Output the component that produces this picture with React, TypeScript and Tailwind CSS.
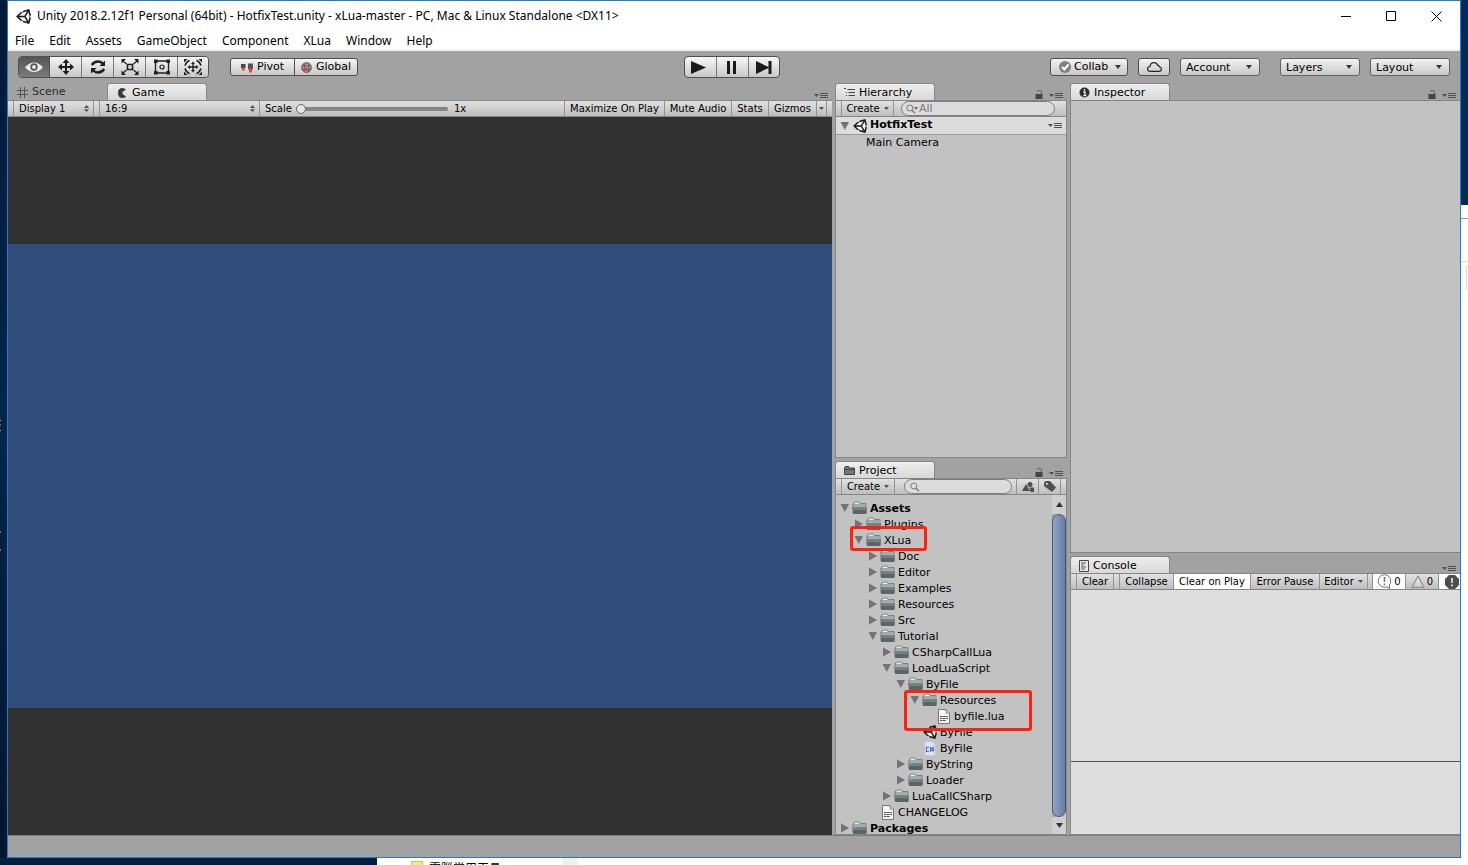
import type { ReactNode } from "react";
import { useState } from "react";

const MENUS = ["File", "Edit", "Assets", "GameObject", "Component", "XLua", "Window", "Help"];

type Node = {
    name: string;
    depth: number;
    icon: "folder" | "text" | "scene" | "script";
    open?: boolean;
    bold?: boolean;
};

const TREE: Node[] = [
    { name: "Assets", depth: 0, icon: "folder", open: true, bold: true },
    { name: "Plugins", depth: 1, icon: "folder", open: false },
    { name: "XLua", depth: 1, icon: "folder", open: true },
    { name: "Doc", depth: 2, icon: "folder", open: false },
    { name: "Editor", depth: 2, icon: "folder", open: false },
    { name: "Examples", depth: 2, icon: "folder", open: false },
    { name: "Resources", depth: 2, icon: "folder", open: false },
    { name: "Src", depth: 2, icon: "folder", open: false },
    { name: "Tutorial", depth: 2, icon: "folder", open: true },
    { name: "CSharpCallLua", depth: 3, icon: "folder", open: false },
    { name: "LoadLuaScript", depth: 3, icon: "folder", open: true },
    { name: "ByFile", depth: 4, icon: "folder", open: true },
    { name: "Resources", depth: 5, icon: "folder", open: true },
    { name: "byfile.lua", depth: 6, icon: "text" },
    { name: "ByFile", depth: 5, icon: "scene" },
    { name: "ByFile", depth: 5, icon: "script" },
    { name: "ByString", depth: 4, icon: "folder", open: false },
    { name: "Loader", depth: 4, icon: "folder", open: false },
    { name: "LuaCallCSharp", depth: 3, icon: "folder", open: false },
    { name: "CHANGELOG", depth: 2, icon: "text" },
    { name: "Packages", depth: 0, icon: "folder", open: false, bold: true },
];

/* ---------- icons ---------- */

function UnityLogo({ size = 14 }: { size?: number }) {
    return (
        <svg width={size} height={size} viewBox="14 12 486 488" className="shrink-0">
            <path d="M114 232H288L375 86 224 124Z M114 280H288L375 426 224 388Z M417 110L330 256 417 402 459 256Z" fill="#f4f4f4" />
            <path
                fill="#1c1c1c"
                d="M498.11,206.4,445.31,14.72,248.2,66.08,219,116.14l-59.2-.43L15.54,256,159.82,396.32l59.17-.43,29.24,50,197.08,51.36,52.8-191.62-30-49.63ZM223.77,124.2,374.55,86.51,288,232.33H114.87Zm0,263.63L114.87,279.71H288l86.55,145.81Zm193,14L330.17,256l86.58-145.84L458.56,256Z"
            />
        </svg>
    );
}

function Triangle({ open }: { open?: boolean }) {
    return (
        <svg width="10" height="10" viewBox="0 0 10 10" className="shrink-0">
            <path d={open ? "M0.500 1h8.500L4.800 9z" : "M1 0.500v9L9 5z"} fill="#737373" />
        </svg>
    );
}

function FolderIcon() {
    return (
        <svg width="16" height="14" viewBox="0 0 16 14" className="shrink-0">
            <path d="M1 12V3L2.500 1h4.500L8.300 2.500H14V12z" fill="#8b9696" stroke="#6d7878" strokeWidth=".8" />
            <path d="M2.800 1.500H6.800L8 3H2z" fill="#e2e7e7" />
            <path d="M2 4h11.500" stroke="#b4bdbd" />
            <path d="M0.500 5h14.500l-.6 8H1.100z" fill="#58666a" />
            <path d="M0.500 5h14.500l-.3 4H.8z" fill="#75827f" />
            <path d="M0.500 5.500h14.500" stroke="#a9b3b3" />
        </svg>
    );
}

function TextFileIcon() {
    return (
        <svg width="16" height="15" viewBox="0 0 16 15" className="shrink-0">
            <path d="M2.500 0.500h7.500l3.500 3.500v10.500h-11z" fill="#f6f6f6" stroke="#777" />
            <path d="M10 0.500v3.500h3.500" fill="#cfcfcf" stroke="#888" />
            <path d="M4 7.500h8M4 9.500h8M4 11.500h6" stroke="#4a4a4a" strokeDasharray="2 .6 3 .6" />
        </svg>
    );
}

function ScriptIcon() {
    return (
        <svg width="16" height="15" viewBox="0 0 16 15" className="shrink-0">
            <path d="M3 0.500h7l3 3v11H3z" fill="#dce3ee" stroke="#c3ccd9" />
            <path d="M7 6.300H4.500v4.200H7M8.700 5.800v5M11 5.800v5M7.700 7.300h4.500M7.700 9.400h4.500" fill="none" stroke="#3f6fc4" strokeWidth="1.100" />
        </svg>
    );
}

function NodeIcon({ icon }: { icon: Node["icon"] }) {
    if (icon === "folder") return <FolderIcon />;
    if (icon === "text") return <TextFileIcon />;
    if (icon === "script") return <ScriptIcon />;
    return <span className="px-px"><UnityLogo /></span>;
}

function Caret() {
    return (
        <svg width="6" height="4" viewBox="0 0 6 4" className="shrink-0">
            <path d="M0 0h6L3 4z" fill="#333" />
        </svg>
    );
}

function SmallCaret() {
    return (
        <svg width="5" height="3" viewBox="0 0 5 3" className="shrink-0">
            <path d="M0 0h5L2.500 3z" fill="#505050" />
        </svg>
    );
}

function UpDown() {
    return (
        <svg width="5" height="7" viewBox="0 0 5 7">
            <path d="M0 3L2.500 0 5 3zM0 4.200h5L2.500 7z" fill="#505050" />
        </svg>
    );
}

function PaneMenu() {
    return (
        <button type="button" aria-label="Panel menu" className="flex items-center">
            <svg width="14" height="7" viewBox="0 0 14 7">
                <path d="M0 2h5L2.500 5z" fill="#505050" />
                <path d="M6 1.500h8M6 3.500h8M6 5.500h8" stroke="#505050" />
            </svg>
        </button>
    );
}

function LockButton() {
    return (
        <button type="button" aria-label="Lock panel">
            <svg width="8" height="9" viewBox="0 0 8 9">
                <path d="M2.500 2V1.200Q2.500 .5 4 .5h.8Q6.500 .5 6.500 2v3" fill="none" stroke="#606060" />
                <path d="M0.500 4h7v5h-7z" fill="#454545" />
            </svg>
        </button>
    );
}

function SearchIcon({ caret }: { caret?: boolean }) {
    return (
        <svg width="13" height="10" viewBox="0 0 13 10" className="shrink-0">
            <circle cx="3.800" cy="4" r="3" fill="none" stroke="#7b7b7b" />
            <path d="M6 6.200l3 3" stroke="#7b7b7b" strokeWidth="1.400" />
            {caret && <path d="M7.500 3h5L10 6z" fill="#7b7b7b" />}
        </svg>
    );
}

const TOOLS = [
    {
        name: "Hand",
        art: (
            <>
                <path d="M1 8.500Q10 -1.500 19 8.500Q10 17.500 1 8.500z" fill="#ececec" />
                <circle cx="10" cy="8" r="2.800" fill="none" stroke="#555" strokeWidth="1.800" />
            </>
        ),
    },
    {
        name: "Move",
        art: <path d="M10 0l3.500 4h-2.500v3h3V4.500L18 8l-4 3.500V9h-3v3h2.500L10 16l-3.500-4H9V9H6v2.500L2 8l4-3.500V7h3V4H6.500z" fill="#1f1f1f" />,
    },
    {
        name: "Rotate",
        art: (
            <>
                <path d="M3.800 6Q6 2.500 10 2.500Q13 2.500 14.800 4.500M16.200 10Q14 13.500 10 13.500Q7 13.500 5.200 11.500" fill="none" stroke="#1f1f1f" strokeWidth="2.400" />
                <path d="M17 1.500V7h-5.500zM3 14.500V9h5.500z" fill="#1f1f1f" />
            </>
        ),
    },
    {
        name: "Scale",
        art: (
            <>
                <path d="M7.500 5.500h5v5h-5z" fill="none" stroke="#1f1f1f" strokeWidth="1.600" />
                <path d="M3 2l3.500 3M17 2l-3.500 3M3 14l3.500-3M17 14l-3.500-3" stroke="#1f1f1f" strokeWidth="1.200" />
                <path d="M1.500 0h4.500L1.500 4.500zM18.500 0h-4.500l4.500 4.500zM1.500 16h4.500l-4.500-4.500zM18.500 16h-4.500l4.500-4.500z" fill="#1f1f1f" />
            </>
        ),
    },
    {
        name: "Rect",
        art: (
            <>
                <path d="M3.500 2h13v12h-13z" fill="none" stroke="#1f1f1f" strokeWidth="1.300" />
                <circle cx="10" cy="8" r="2" fill="none" stroke="#1f1f1f" strokeWidth="1.200" />
                <path d="M2 .5h3.500V4H2zM14.500 .5H18V4h-3.500zM2 12h3.500v3.500H2zM14.500 12H18v3.500h-3.500z" fill="#1f1f1f" />
            </>
        ),
    },
    {
        name: "Transform",
        art: (
            <>
                <path d="M10 2.500l2 2.500h-1.300v2.300H13V6l2.500 2-2.500 2V8.700h-2.300V11H12l-2 2.500L8 11h1.300V8.700H7V10L4.500 8 7 6v1.300h2.300V5H8z" fill="#1f1f1f" />
                <path d="M2 6.500Q3 3 6.500 1.200M18 6.500Q17 3 13.500 1.200M2 9.500Q3 13 6.500 14.800M18 9.500Q17 13 13.500 14.800" fill="none" stroke="#1f1f1f" strokeWidth="1.700" />
                <path d="M1 0h3.500L1 3.500zM19 0h-3.500L19 3.500zM1 16h3.500L1 12.500zM19 16h-3.500l3.500-3.500z" fill="#1f1f1f" />
            </>
        ),
    },
];

/* ---------- building blocks ---------- */

function Tab({ icon, label, active = true }: { icon: ReactNode; label: string; active?: boolean }) {
    return (
        <button
            type="button"
            role="tab"
            aria-selected={active}
            className={
                active
                    ? "flex h-[17px] w-[100px] items-center gap-1 rounded-t-[3px] border border-b-0 border-[#868686] bg-linear-to-b from-[#eeeeee] to-[#d8d8d8] pt-px pl-2 text-[11px] leading-4"
                    : "flex h-[17px] w-[99px] items-center gap-1 pt-px pl-2 text-[11px] leading-4 text-[#2c2c2c]"
            }
        >
            {icon}
            {label}
        </button>
    );
}

function TabRow({ children, lock }: { children: ReactNode; lock?: boolean }) {
    return (
        <div className="flex h-[17px] shrink-0 items-end justify-between">
            <div role="tablist" className="flex">{children}</div>
            <div className="flex items-end gap-1.5 pr-1 pb-px">
                {lock && <LockButton />}
                <PaneMenu />
            </div>
        </div>
    );
}

function StripButton({ children, className }: { children: ReactNode; className: string }) {
    return (
        <button type="button" className={`flex h-full shrink-0 items-center justify-center border-r border-[#929292] whitespace-nowrap ${className}`}>
            {children}
        </button>
    );
}

const STRIP =
    "flex h-[17px] shrink-0 items-stretch overflow-hidden border-t border-b border-[#868686] bg-linear-to-b from-[#e2e2e2] to-[#bebebe] text-[10px] leading-[15px]";

function Stub() {
    return <span className="w-1.5 shrink-0 border-r border-[#929292]" />;
}

function TopSelect({ label }: { label: string }) {
    return (
        <div className="relative flex w-20 items-center">
            <select
                aria-label={label}
                className="h-[18px] w-full appearance-none rounded-[3px] border border-[#616161] bg-linear-to-b from-[#f3f3f3] to-[#c8c8c8] pt-px pl-[5px] text-[11px] leading-4"
            >
                <option>{label}</option>
            </select>
            <span className="pointer-events-none absolute right-2"><Caret /></span>
        </div>
    );
}

function StripSelect({ label, value, className }: { label: string; value: string; className: string }) {
    return (
        <div className={`relative flex shrink-0 items-center border-r border-[#929292] ${className}`}>
            <select aria-label={label} className="h-full w-full appearance-none pl-[5px]">
                <option>{value}</option>
            </select>
            <span className="pointer-events-none absolute right-1"><UpDown /></span>
        </div>
    );
}

/* ---------- panels ---------- */

function Toolbar() {
    const [tool, setTool] = useState("Hand");

    return (
        <div className="grid h-8 shrink-0 grid-cols-[666fr_100fr_666fr] items-center px-2.5">
            <div className="flex items-center gap-[21px]">
                <div className="flex h-[22px] overflow-hidden rounded-[4px] border border-[#505050]">
                    {TOOLS.map((t) => (
                        <button
                            key={t.name}
                            type="button"
                            aria-label={t.name}
                            onClick={() => setTool(t.name)}
                            className={
                                t.name === tool
                                    ? "flex w-8 items-center justify-center border-r border-[#505050] bg-linear-to-b from-[#555555] to-[#7b7b7b] first:w-[31px]"
                                    : "flex w-8 items-center justify-center border-r border-[#7b7b7b] bg-linear-to-b from-[#f6f6f6] to-[#c8c8c8] first:w-[31px] last:w-[30px] last:border-r-0"
                            }
                        >
                            <svg width="20" height="16" viewBox="0 0 20 16">{t.art}</svg>
                        </button>
                    ))}
                </div>
                <div className="flex h-[18px] overflow-hidden rounded-[3px] border border-[#505050] bg-linear-to-b from-[#f6f6f6] to-[#c8c8c8] text-[11px]">
                    <button type="button" className="flex w-16 items-center justify-center gap-1 border-r border-[#505050] pt-px">
                        <svg width="12" height="10" viewBox="0 0 12 10">
                            <path d="M0 1h4.500v4H0z" fill="#444" />
                            <path d="M.8 4.500h3v3h-3z" fill="#d24a50" />
                            <path d="M7 .5h5v6H7z" fill="#555" />
                            <path d="M8 5h3v4.500H8z" fill="#d24a50" />
                        </svg>
                        Pivot
                    </button>
                    <button type="button" className="flex w-[62px] items-center justify-center gap-1 pt-px">
                        <svg width="11" height="11" viewBox="0 0 11 11">
                            <circle cx="5.500" cy="5.500" r="4.800" fill="#a3a3a3" stroke="#4e4e4e" />
                            <path d="M1 4h9M1 7.500h9M7.500 1v9" stroke="#555" strokeWidth=".8" />
                            <path d="M3.500 1.500V7.500h5" fill="none" stroke="#cf3a42" strokeWidth="1.800" />
                        </svg>
                        Global
                    </button>
                </div>
            </div>

            <div className="flex">
                <div className="flex h-[22px] overflow-hidden rounded-[4px] border border-[#505050] bg-linear-to-b from-[#f8f8f8] to-[#c8c8c8]">
                    <button type="button" aria-label="Play" className="flex w-8 items-center justify-center border-r border-[#7b7b7b] pr-1">
                        <svg width="15" height="13" viewBox="0 0 15 13"><path d="M0 0l15 6.500L0 13z" fill="#1a1a1a" /></svg>
                    </button>
                    <button type="button" aria-label="Pause" className="flex w-8 items-center justify-center border-r border-[#7b7b7b] pr-0.5">
                        <svg width="9" height="13" viewBox="0 0 9 13"><path d="M0 0h3v13H0zM6 0h3v13H6z" fill="#1a1a1a" /></svg>
                    </button>
                    <button type="button" aria-label="Step" className="flex w-[30px] items-center justify-center">
                        <svg width="16" height="13" viewBox="0 0 16 13"><path d="M0 0l12.500 6V0H15.500v13h-3V7L0 13z" fill="#1a1a1a" /></svg>
                    </button>
                </div>
            </div>

            <div className="flex items-center justify-end gap-2.5">
                <button type="button" className="flex h-[18px] w-[78px] items-center rounded-[3px] border border-[#505050] bg-linear-to-b from-[#f3f3f3] to-[#c8c8c8] pl-2 text-[11px]">
                    <svg width="12" height="12" viewBox="0 0 12 12">
                        <circle cx="6" cy="6" r="6" fill="#808080" />
                        <path d="M3 6l2.300 2.500L9.500 3.500" fill="none" stroke="#fff" strokeWidth="2" />
                    </svg>
                    <span className="grow pt-px pl-[3px] text-left">Collab</span>
                    <span className="pr-1.5"><Caret /></span>
                </button>
                <button type="button" aria-label="Cloud services" className="flex h-[18px] w-8 items-center justify-center rounded-[3px] border border-[#505050] bg-linear-to-b from-[#f3f3f3] to-[#c8c8c8]">
                    <svg width="15" height="10" viewBox="0 0 15 10">
                        <path d="M3.500 9.300Q.6 9.300 .6 6.900Q.6 4.800 3 4.500Q3.500 .7 7 .7Q9.800 .7 10.700 3.300Q12 3 12.300 4.800Q14.400 5.200 14.400 7.200Q14.400 9.300 12 9.300z" fill="none" stroke="#222" strokeWidth="1.200" />
                    </svg>
                </button>
                <TopSelect label="Account" />
                <div className="flex gap-2.5 pl-2.5">
                    <TopSelect label="Layers" />
                    <TopSelect label="Layout" />
                </div>
            </div>
        </div>
    );
}

function GamePanel() {
    return (
        <section className="flex min-h-0 min-w-0 flex-col">
            <TabRow>
                <Tab
                    active={false}
                    label="Scene"
                    icon={
                        <svg width="12" height="11" viewBox="0 0 12 11">
                            <path d="M4.500 0v11M8.500 0v11M1 3.500h11M1 7.500h11" stroke="#555" />
                        </svg>
                    }
                />
                <Tab
                    label="Game"
                    icon={
                        <svg width="12" height="10" viewBox="0 0 12 10">
                            <path d="M10 1.500Q8.500 0 6.500 0Q2 0 2 5Q2 10 6.500 10Q8.500 10 10 8.500L6.500 6V4z" fill="#3a3a3a" />
                        </svg>
                    }
                />
            </TabRow>
            <div className={STRIP}>
                <Stub />
                <StripSelect label="Display" value="Display 1" className="w-20" />
                <Stub />
                <StripSelect label="Aspect ratio" value="16:9" className="w-40" />
                <label className="flex grow items-center gap-1 border-r border-[#929292] pl-[5px]">
                    Scale
                    <input
                        type="range"
                        min={1}
                        max={5}
                        defaultValue={1}
                        className="h-2.5 w-[152px] appearance-none bg-transparent [&::-webkit-slider-runnable-track]:h-1 [&::-webkit-slider-runnable-track]:rounded-full [&::-webkit-slider-runnable-track]:bg-[#858585] [&::-webkit-slider-thumb]:-mt-[3px] [&::-webkit-slider-thumb]:size-2.5 [&::-webkit-slider-thumb]:appearance-none [&::-webkit-slider-thumb]:rounded-full [&::-webkit-slider-thumb]:border [&::-webkit-slider-thumb]:border-[#6a6a6a] [&::-webkit-slider-thumb]:bg-[#e6e6e6]"
                    />
                    <span className="pl-0.5">1x</span>
                </label>
                <StripButton className="w-[100px]">Maximize On Play</StripButton>
                <StripButton className="w-[67px]">Mute Audio</StripButton>
                <StripButton className="w-[37px]">Stats</StripButton>
                <StripButton className="w-12">Gizmos</StripButton>
                <StripButton className="w-2.5"><SmallCaret /></StripButton>
                <span className="w-[5px]" />
            </div>
            <div className="flex min-h-0 grow flex-col justify-center bg-[#313131]">
                <div className="aspect-video w-full bg-[#314d79]" />
            </div>
        </section>
    );
}

function HierarchyPanel() {
    return (
        <section className="flex min-h-0 shrink grow-[375] basis-0 flex-col">
            <TabRow lock>
                <Tab
                    label="Hierarchy"
                    icon={
                        <svg width="11" height="9" viewBox="0 0 11 9" className="shrink-0">
                            <path d="M0 .5h2M3.500 1.500H11M4.500 4.500H11M4.500 7.500H11M2 4.500h1M2 7.500h1" stroke="#444" />
                        </svg>
                    }
                />
            </TabRow>
            <div className="flex min-h-0 grow flex-col border-x border-b border-[#868686] bg-[#c2c2c2]">
                <div className={STRIP}>
                    <Stub />
                    <StripButton className="w-[52px] gap-1">Create <SmallCaret /></StripButton>
                    <label className="mx-[7px] flex w-[154px] items-center rounded-full border border-[#7d7d7d] bg-[#dcdcdc] pl-1">
                        <SearchIcon caret />
                        <input aria-label="Search hierarchy" placeholder="All" className="h-[13px] w-full bg-transparent text-[11px] outline-none placeholder:text-[#7b7b7b]" />
                    </label>
                </div>
                <div className="flex h-[18px] shrink-0 items-center border-b border-[#9a9a9a] bg-[#dcdcdc] pl-1 text-[11px]">
                    <Triangle open />
                    <span className="pl-[3px]"><UnityLogo /></span>
                    <span className="grow pl-[3px] font-bold">HotfixTest</span>
                    <span className="flex pr-1"><PaneMenu /></span>
                </div>
                <div className="pl-[30px] text-[11px] leading-4">Main Camera</div>
            </div>
        </section>
    );
}

function ProjectPanel() {
    return (
        <section className="flex min-h-0 shrink grow-[374] basis-0 flex-col">
            <TabRow lock>
                <Tab
                    label="Project"
                    icon={
                        <svg width="11" height="9" viewBox="0 0 11 9">
                            <path d="M.5 8.500v-7l1-1h3l1 1.500h5v6.500z" fill="#777" stroke="#444" />
                            <path d="M1 3.500h9" stroke="#444" />
                        </svg>
                    }
                />
            </TabRow>
            <div className="flex min-h-0 grow flex-col border-x border-b border-[#868686] bg-[#c2c2c2]">
                <div className={STRIP}>
                    <Stub />
                    <StripButton className="w-[53px] gap-1">Create <SmallCaret /></StripButton>
                    <label className="mr-1 ml-[9px] flex w-[108px] items-center rounded-full border border-[#7d7d7d] bg-[#dcdcdc] pl-[5px]">
                        <SearchIcon />
                        <input aria-label="Search project" className="h-[13px] w-full bg-transparent text-[11px] outline-none" />
                    </label>
                    <span className="flex grow border-l border-[#929292]">
                        <StripButton className="w-[22px]">
                            <svg width="12" height="10" viewBox="0 0 12 10">
                                <circle cx="8" cy="2.500" r="2.500" fill="#505050" />
                                <path d="M4 2l4 7H0z" fill="#505050" />
                                <path d="M7.500 5.500H12V10H8.500z" fill="#505050" />
                            </svg>
                        </StripButton>
                        <StripButton className="w-[22px]">
                            <svg width="12" height="11" viewBox="0 0 12 11">
                                <path d="M0 1.500L1.500 0H6l6 6.500L8 11 0 5z" fill="#505050" />
                                <circle cx="2.800" cy="2.800" r="1.100" fill="#d8d8d8" />
                            </svg>
                        </StripButton>
                    </span>
                </div>
                <div className="flex min-h-0 grow">
                    <div className="relative min-w-0 grow overflow-hidden pt-[5px]">
                        <ul role="tree">
                            {TREE.map((node, i) => (
                                <li
                                    key={i}
                                    role="treeitem"
                                    aria-expanded={node.open}
                                    className="flex h-4 items-center text-[11px] leading-[15px]"
                                    style={{ paddingLeft: 4 + node.depth * 14 }}
                                >
                                    <span className="flex w-3 shrink-0">{node.open !== undefined && <Triangle open={node.open} />}</span>
                                    <NodeIcon icon={node.icon} />
                                    <span className={node.bold ? "pt-px pl-0.5 font-bold" : "pt-px pl-0.5"}>{node.name}</span>
                                </li>
                            ))}
                        </ul>
                        {/* annotation frames */}
                        <div className="absolute top-[31px] left-3.5 h-[25px] w-[77px] rounded-[3px] border-3 border-[#ff2010]" />
                        <div className="absolute top-[195px] left-[68px] h-[41px] w-32 rounded-[3px] border-3 border-[#ff2010]" />
                    </div>
                    <div className="flex w-3.5 shrink-0 flex-col bg-linear-to-r from-[#a2a2a2] to-[#c6c6c6]">
                        <button type="button" aria-label="Scroll up" className="flex h-[19px] items-center justify-center bg-[#cfcfcf]">
                            <svg width="7" height="5" viewBox="0 0 7 5"><path d="M0 5h7L3.500 0z" fill="#333" /></svg>
                        </button>
                        <div className="grow rounded-full border border-[#46597b] bg-linear-to-r from-[#93a6c6] to-[#637ba3]" />
                        <button type="button" aria-label="Scroll down" className="flex h-[17px] items-center justify-center bg-[#cfcfcf]">
                            <svg width="7" height="5" viewBox="0 0 7 5"><path d="M0 0h7L3.500 5z" fill="#333" /></svg>
                        </button>
                    </div>
                </div>
            </div>
        </section>
    );
}

function InspectorPanel() {
    return (
        <section className="flex min-h-0 shrink grow-[470] basis-0 flex-col">
            <TabRow lock>
                <Tab
                    label="Inspector"
                    icon={
                        <svg width="11" height="11" viewBox="0 0 11 11">
                            <circle cx="5.500" cy="5.500" r="5" fill="#2e2e2e" />
                            <path d="M5.500 2v1.800M4.300 5h1.700v3.500M4.300 8.500h3" fill="none" stroke="#eee" strokeWidth="1.300" />
                        </svg>
                    }
                />
            </TabRow>
            <div className="grow border border-r-0 border-[#868686] bg-[#c2c2c2]" />
        </section>
    );
}

function ConsolePanel() {
    return (
        <section className="flex min-h-0 shrink grow-[279] basis-0 flex-col">
            <TabRow>
                <Tab
                    label="Console"
                    icon={
                        <svg width="10" height="12" viewBox="0 0 10 12">
                            <path d="M.5 .5h9v11h-9z" fill="#eaeaea" stroke="#444" />
                            <path d="M2 3h5M2 5h3M2 7h5M2 9h4" stroke="#555" />
                        </svg>
                    }
                />
            </TabRow>
            <div className="flex min-h-0 grow flex-col border-b border-l border-[#868686] bg-[#dedede]">
                <div className={STRIP}>
                    <Stub />
                    <StripButton className="w-[37px]">Clear</StripButton>
                    <Stub />
                    <StripButton className="w-[54px]">Collapse</StripButton>
                    <StripButton className="w-[77px] bg-white">Clear on Play</StripButton>
                    <StripButton className="w-[69px]">Error Pause</StripButton>
                    <StripButton className="w-12 gap-1">Editor <SmallCaret /></StripButton>
                    <span className="min-w-[5px] grow border-r border-[#929292]" />
                    <StripButton className="w-[33px] gap-px bg-white">
                        <svg width="16" height="15" viewBox="0 0 16 15">
                            <circle cx="7.500" cy="7" r="6.300" fill="#fff" stroke="#777" />
                            <path d="M9.500 12.800l3 2v-4" fill="#fff" stroke="#777" />
                            <path d="M7.500 3v5M7.500 9.500v1.800" stroke="#777" strokeWidth="1.600" />
                        </svg>
                        0
                    </StripButton>
                    <StripButton className="w-[33px] gap-0.5">
                        <svg width="14" height="13" viewBox="0 0 14 13">
                            <path d="M7 .8l6.200 11.500H.8z" fill="#ccc" stroke="#888" />
                            <path d="M7 4.500v4M7 9.500v1.500" stroke="#eee" strokeWidth="1.600" />
                        </svg>
                        0
                    </StripButton>
                    <button type="button" aria-label="Errors" className="flex w-[21px] shrink-0 items-center justify-end bg-white">
                        <svg width="16" height="14" viewBox="0 0 16 14">
                            <path d="M5 0h6l4 4v6l-4 4H5l-4-4V4z" fill="#4e4e4e" />
                            <path d="M8 3v5M8 9.500v1.700" stroke="#ddd" strokeWidth="1.800" />
                        </svg>
                    </button>
                </div>
                <div className="shrink grow-[172] basis-0" />
                <div className="shrink grow-[72] basis-0 border-t border-[#555]" />
            </div>
        </section>
    );
}

export default function App() {
    return (
        <div className="flex h-screen flex-col bg-[#03254c] font-['DejaVu_Sans',Verdana,sans-serif] text-black">
            <div className="flex min-h-0 grow">
                <div className="w-[7px] shrink-0 bg-linear-to-b from-[#011a36] via-[#03254c] to-[#01152e]">
                    <svg width="7" height="560" viewBox="0 0 7 560">
                        <path d="M0 420.500h1M0 430.500h1" stroke="#f0a060" />
                        <path d="M0 425h1M0 532h1M0 550h1" stroke="#b85038" strokeWidth="2" />
                    </svg>
                </div>

                <div className="flex min-w-0 grow flex-col border border-[#1a7fd4] bg-[#a2a2a2]">
                    <header className="shrink-0 border-b-2 border-[#f0f0f0] bg-white font-['Noto_Sans','Noto_Sans_CJK_SC',sans-serif] text-[12px]">
                        <div className="flex h-[30px] items-center pl-2">
                            <UnityLogo size={15} />
                            <h1 className="grow pl-1.5">Unity 2018.2.12f1 Personal (64bit) - HotfixTest.unity - xLua-master - PC, Mac &amp; Linux Standalone &lt;DX11&gt;</h1>
                            <div className="flex gap-[35px] pr-[18px]">
                                <button type="button" aria-label="Minimize">
                                    <svg width="10" height="10" viewBox="0 0 10 10"><path d="M0 5.500h10" stroke="#000" /></svg>
                                </button>
                                <button type="button" aria-label="Maximize">
                                    <svg width="10" height="10" viewBox="0 0 10 10"><path d="M.5 .5h9v9h-9z" fill="none" stroke="#000" /></svg>
                                </button>
                                <button type="button" aria-label="Close">
                                    <svg width="11" height="11" viewBox="0 0 11 11"><path d="M.5 .5l10 10M10.500 .5l-10 10" stroke="#000" /></svg>
                                </button>
                            </div>
                        </div>
                        <nav className="flex h-[18px] items-center gap-[15px] pt-0.5 pl-[7px]">
                            {MENUS.map((m) => (
                                <button key={m} type="button">{m}</button>
                            ))}
                        </nav>
                    </header>

                    <Toolbar />

                    <main className="grid min-h-0 grow grid-cols-[824fr_232fr_390fr] gap-[3px]">
                        <GamePanel />
                        <div className="flex min-h-0 min-w-0 flex-col gap-[3px]">
                            <HierarchyPanel />
                            <ProjectPanel />
                        </div>
                        <div className="flex min-h-0 min-w-0 flex-col gap-[3px]">
                            <InspectorPanel />
                            <ConsolePanel />
                        </div>
                    </main>

                    <footer className="h-[22px] shrink-0 border-t border-[#7c7c7c]" />
                </div>

                <div className="flex w-[7px] shrink-0 flex-col bg-white">
                    <div className="h-[205px] bg-[#022a57]" />
                    <div className="h-3.5 border-b border-[#999]" />
                    <div className="h-[43px] border-b border-[#ddd]" />
                    <div className="mt-1 ml-[5px] h-6 border border-r-0 border-[#ddd]" />
                </div>
            </div>

            <div className="flex h-[7px] shrink-0 overflow-hidden">
                <div className="w-[377px] bg-[#02203f]" />
                <div className="flex grow items-start bg-white pl-[34px] font-['Noto_Sans_CJK_TC',sans-serif] text-[12px] leading-4">
                    <div className="mt-[3px] h-3 w-3 border border-[#e5b93c] bg-[#ffe58a]" />
                    <span className="pt-0.5 pl-1.5">電腦常用工具</span>
                    <div className="ml-[61px] h-[7px] w-4 bg-[#f0f0f0]" />
                </div>
            </div>
        </div>
    );
}
